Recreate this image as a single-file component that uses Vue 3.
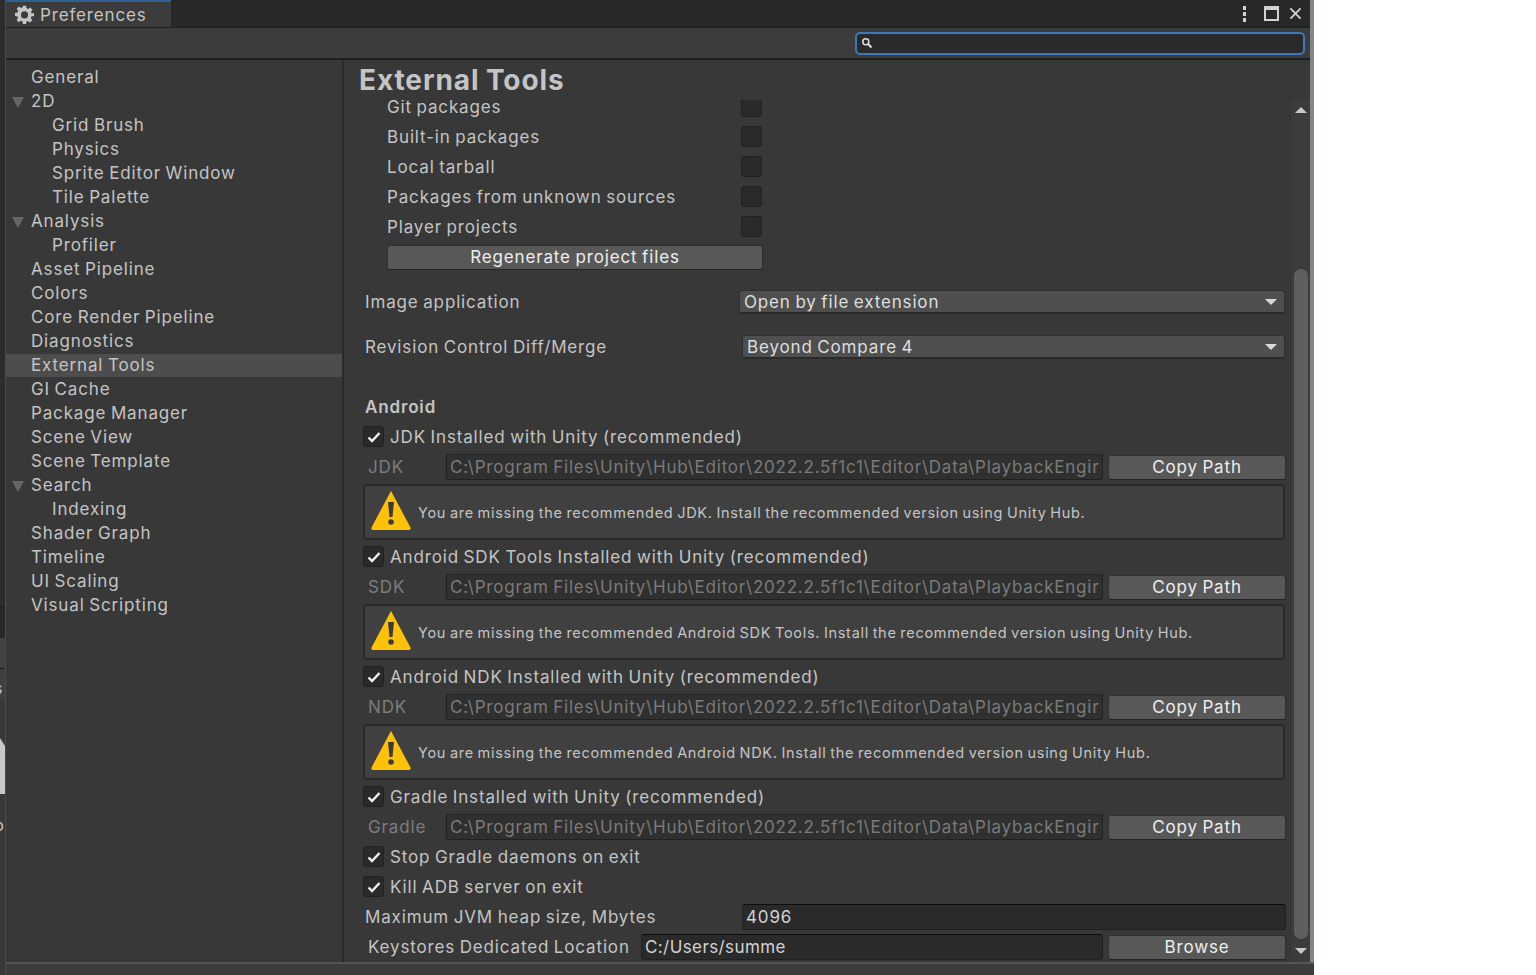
<template>
  <div class="screen">
    <div class="behind">
      <div class="seg seg-top"></div>
      <div class="seg seg-dark"></div>
      <div class="seg seg-light"></div>
      <div class="seg seg-tab"><span>s</span></div>
      <div class="seg seg-mid"></div>
      <div class="seg seg-white"></div>
      <div class="seg seg-low"><span>p</span></div>
    </div>

    <div class="window">
      <div class="titlebar">
        <div class="tab">
          <svg class="gear" viewBox="0 0 24 24" width="20" height="20">
            <path fill="#c4c4c4" fill-rule="evenodd" d="M10 1h4l.6 3.2 1.9.8 2.7-1.8 2.8 2.8-1.8 2.7.8 1.9L24 10v4l-3.2.6-.8 1.9 1.8 2.7-2.8 2.8-2.7-1.8-1.9.8L14 24h-4l-.6-3.2-1.9-.8-2.7 1.8-2.8-2.8 1.8-2.7-.8-1.9L0 14v-4l3.2-.6.8-1.9-1.8-2.7 2.8-2.8 2.7 1.8 1.9-.8zM12 8a4.500 4.500 0 1 0 0 9 4.500 4.500 0 0 0 0-9z"/>
          </svg>
          <span>Preferences</span>
        </div>
        <div class="win-btns">
          <div class="kebab"><i></i><i></i><i></i></div>
          <div class="maximize"></div>
          <svg viewBox="0 0 14 14" width="13" height="13">
            <path d="M1.500 1.500l11 11M12.500 1.500l-11 11" stroke="#d2d2d2" stroke-width="2" fill="none"/>
          </svg>
        </div>
      </div>

      <div class="toolbar">
        <div class="search">
          <svg viewBox="0 0 12 12" width="12" height="12">
            <circle cx="4.800" cy="4.800" r="3" stroke="#e0e0e0" stroke-width="1.500" fill="none"/>
            <path d="M7 7l3.500 3.500" stroke="#e0e0e0" stroke-width="2"/>
          </svg>
        </div>
      </div>

      <div class="main">
        <aside class="sidebar">
          <div
            v-for="item in tree"
            :key="item.label"
            class="tree-row"
            :class="{ selected: item.label === 'External Tools', child: item.child }"
          >
            <span v-if="item.open" class="fold"></span>
            {{ item.label }}
          </div>
        </aside>

        <section class="content">
          <h1>External Tools</h1>
          <div class="body">
            <div class="scroll">
              <div class="list">
                <div v-for="name in packages" :key="name" class="row pkg-row">
                  <span class="pkg-label">{{ name }}</span>
                  <span class="check"></span>
                </div>
                <div class="row pkg-row">
                  <button type="button" class="btn regen">Regenerate project files</button>
                </div>

                <div class="row pick first-pick">
                  <span class="pick-label">Image application</span>
                  <div class="dropdown image-drop">Open by file extension<i></i></div>
                </div>
                <div class="row pick">
                  <span class="pick-label">Revision Control Diff/Merge</span>
                  <div class="dropdown rev-drop">Beyond Compare 4<i></i></div>
                </div>

                <div class="row android"><strong>Android</strong></div>

                <template v-for="tool in tools" :key="tool.short">
                  <div class="row">
                    <span class="check on"><svg viewBox="0 0 14 14" width="14" height="14"><path d="M1.500 7.500l3.500 3.500 7.500-8" stroke="#f0f0f0" stroke-width="2.400" fill="none"/></svg></span>
                    <span class="check-label">{{ tool.label }}</span>
                  </div>
                  <div class="row">
                    <span class="short">{{ tool.short }}</span>
                    <div class="field path">{{ path }}</div>
                    <button type="button" class="btn side-btn">Copy Path</button>
                  </div>
                  <div v-if="tool.warn" class="help">
                    <svg viewBox="0 0 40 40" width="40" height="40">
                      <path d="M20 0L39.500 36.500q.8 2.500-1.500 2.500H2q-2.300 0-1.500-2.500z" fill="#ffc107"/>
                      <path d="M17 11h6l-1.500 15h-3z" fill="#3c3c3c"/>
                      <circle cx="20" cy="31" r="2.800" fill="#3c3c3c"/>
                    </svg>
                    <span>{{ tool.warn }}</span>
                  </div>
                </template>

                <div class="row">
                  <span class="check on"><svg viewBox="0 0 14 14" width="14" height="14"><path d="M1.500 7.500l3.500 3.500 7.500-8" stroke="#f0f0f0" stroke-width="2.400" fill="none"/></svg></span>
                  <span class="check-label">Stop Gradle daemons on exit</span>
                </div>
                <div class="row">
                  <span class="check on"><svg viewBox="0 0 14 14" width="14" height="14"><path d="M1.500 7.500l3.500 3.500 7.500-8" stroke="#f0f0f0" stroke-width="2.400" fill="none"/></svg></span>
                  <span class="check-label">Kill ADB server on exit</span>
                </div>
                <div class="row">
                  <span class="pick-label">Maximum JVM heap size, Mbytes</span>
                  <div class="field heap">4096</div>
                </div>
                <div class="row">
                  <span class="store-label">Keystores Dedicated Location</span>
                  <div class="field store">C:/Users/summe</div>
                  <button type="button" class="btn side-btn">Browse</button>
                </div>
              </div>
            </div>

            <div class="scrollbar">
              <span class="arrow up"></span>
              <div class="track"><div class="thumb"></div></div>
              <span class="arrow down"></span>
            </div>
          </div>
        </section>
      </div>
      <div class="footer"></div>
    </div>
  </div>
</template>

<script setup>
const tree = [
  { label: 'General' },
  { label: '2D', open: true },
  { label: 'Grid Brush', child: true },
  { label: 'Physics', child: true },
  { label: 'Sprite Editor Window', child: true },
  { label: 'Tile Palette', child: true },
  { label: 'Analysis', open: true },
  { label: 'Profiler', child: true },
  { label: 'Asset Pipeline' },
  { label: 'Colors' },
  { label: 'Core Render Pipeline' },
  { label: 'Diagnostics' },
  { label: 'External Tools' },
  { label: 'GI Cache' },
  { label: 'Package Manager' },
  { label: 'Scene View' },
  { label: 'Scene Template' },
  { label: 'Search', open: true },
  { label: 'Indexing', child: true },
  { label: 'Shader Graph' },
  { label: 'Timeline' },
  { label: 'UI Scaling' },
  { label: 'Visual Scripting' },
]

const packages = ['Git packages', 'Built-in packages', 'Local tarball', 'Packages from unknown sources', 'Player projects']

const path = 'C:\\Program Files\\Unity\\Hub\\Editor\\2022.2.5f1c1\\Editor\\Data\\PlaybackEngir'

const tools = [
  {
    short: 'JDK',
    label: 'JDK Installed with Unity (recommended)',
    warn: 'You are missing the recommended JDK. Install the recommended version using Unity Hub.',
  },
  {
    short: 'SDK',
    label: 'Android SDK Tools Installed with Unity (recommended)',
    warn: 'You are missing the recommended Android SDK Tools. Install the recommended version using Unity Hub.',
  },
  {
    short: 'NDK',
    label: 'Android NDK Installed with Unity (recommended)',
    warn: 'You are missing the recommended Android NDK. Install the recommended version using Unity Hub.',
  },
  { short: 'Gradle', label: 'Gradle Installed with Unity (recommended)' },
]
</script>

<style>
html,
body {
  margin: 0;
  background: #fff;
}
</style>

<style scoped>
.screen {
  display: flex;
  width: 1314px;
  height: 975px;
  overflow: hidden;
  font-family: Inter, "Liberation Sans", sans-serif;
  font-size: 17px;
  letter-spacing: 0.85px;
  word-spacing: -1px;
  color: #c4c4c4;
}

.behind {
  flex: 0 0 5px;
  display: flex;
  flex-direction: column;
  overflow: hidden;
  background: #3a3a3a;
}

.seg span {
  display: block;
  margin-left: -6px;
  color: #c4c4c4;
  font-size: 16px;
}

.seg-top { height: 606px; background: #2c2c2c; }
.seg-dark { height: 32px; background: #282828; border-top: 1px solid #1c1c1c; box-sizing: border-box; }
.seg-light { height: 30px; background: #424242; }
.seg-tab { height: 32px; padding-top: 9px; box-sizing: border-box; background: #3f3f3f; border-top: 1px solid #1c1c1c; }
.seg-mid { height: 38px; background: #383838; }
.seg-white { height: 56px; background: #c8c8c8; clip-path: polygon(0 0, 100% 8px, 100% 100%, 0 100%); }
.seg-low { height: 181px; padding-top: 21px; box-sizing: border-box; background: #383838; }

.window {
  flex: 1;
  min-width: 0;
  display: flex;
  flex-direction: column;
  border-left: 1px solid #4a4a4a;
  border-right: 4px solid #7d8888;
}

.titlebar {
  flex: 0 0 27px;
  display: flex;
  justify-content: space-between;
  background: #282828;
  border-bottom: 1px solid #1f1f1f;
}

.tab {
  width: 165px;
  box-sizing: border-box;
  border-top: 2px solid #2f5f93;
  background: #3c3c3c;
  display: flex;
  align-items: center;
  gap: 6px;
  padding-left: 9px;
}

.gear {
  width: 19px;
  height: 19px;
}

.win-btns {
  display: flex;
  align-items: center;
  gap: 10px;
  padding-right: 8px;
}

.kebab {
  display: flex;
  flex-direction: column;
  gap: 2px;
  margin-right: 8px;
}

.kebab i {
  width: 3px;
  height: 4px;
  background: #d2d2d2;
}

.maximize {
  width: 11px;
  height: 9px;
  border: 2px solid #d2d2d2;
  border-top-width: 4px;
}

.toolbar {
  flex: 0 0 30px;
  display: flex;
  justify-content: flex-end;
  align-items: center;
  padding-right: 5px;
  background: #3c3c3c;
  border-bottom: 2px solid #1f1f1f;
}

.search {
  width: 450px;
  height: 23px;
  display: flex;
  align-items: center;
  padding-left: 4px;
  box-sizing: border-box;
  background: #2a2a2a;
  border: 2px solid #3a79bb;
  border-radius: 5px;
}

.main {
  flex: 1;
  min-height: 0;
  display: flex;
}

.sidebar {
  flex: 0 0 336px;
  padding-top: 5px;
  background: #383838;
  border-right: 2px solid #2a2a2a;
}

.tree-row {
  position: relative;
  height: 24px;
  line-height: 24px;
  padding-left: 25px;
}

.tree-row.child {
  padding-left: 46px;
}

.tree-row.selected {
  box-sizing: border-box;
  line-height: 22px;
  background: #4d4d4d;
  border-top: 1px solid #383838;
}

.fold {
  position: absolute;
  left: 6px;
  top: 8px;
  width: 0;
  height: 0;
  border-left: 6px solid transparent;
  border-right: 6px solid transparent;
  border-top: 11px solid #666;
}

.content {
  flex: 1;
  min-width: 0;
  display: flex;
  flex-direction: column;
  background: #383838;
}

h1 {
  flex: 0 0 40px;
  min-height: 0;
  margin: 0;
  padding-left: 15px;
  font-size: 28px;
  line-height: 41px;
  font-weight: 700;
  letter-spacing: 0.9px;
  color: #c4c4c4;
}

.body {
  flex: 1;
  min-height: 0;
  display: flex;
}

.scroll {
  flex: 1;
  min-width: 0;
  overflow: hidden;
}

.list {
  margin-top: -8px;
  padding-left: 19px;
  padding-right: 3px;
}

.row {
  height: 30px;
  display: flex;
  align-items: center;
}

.pkg-row {
  padding-left: 24px;
}

.pkg-label {
  width: 354px;
}

.check {
  width: 19px;
  height: 19px;
  margin-top: -1px;
  flex: none;
  display: flex;
  align-items: center;
  justify-content: center;
  background: #2a2a2a;
  border: 1px solid #212121;
  border-radius: 3px;
}

.check.on {
  margin-right: 6px;
}

.btn {
  height: 25px;
  padding: 0;
  box-sizing: border-box;
  font: inherit;
  letter-spacing: inherit;
  word-spacing: inherit;
  color: #eee;
  background: #585858;
  border: 1px solid #303030;
  border-bottom-color: #242424;
  border-radius: 3px;
}

.regen {
  width: 376px;
}

.pick {
  justify-content: space-between;
  margin-top: 15px;
}

.android {
  margin-top: 30px;
  padding-left: 2px;
  color: #c4c4c4;
}

.android strong {
  font-weight: 600;
}

.pick-label {
  padding-left: 2px;
}

.dropdown {
  position: relative;
  height: 24px;
  line-height: 23px;
  box-sizing: border-box;
  margin-right: 2px;
  padding-left: 4px;
  color: #dedede;
  background: #4f4f4f;
  border: 1px solid #303030;
  border-bottom: 2px solid #2a2a2a;
  border-radius: 3px;
}

.dropdown i {
  position: absolute;
  right: 7px;
  top: 8px;
  width: 0;
  height: 0;
  border-left: 6px solid transparent;
  border-right: 6px solid transparent;
  border-top: 6px solid #d8d8d8;
}

.image-drop {
  width: 546px;
}

.rev-drop {
  width: 543px;
}

.short {
  width: 83px;
  flex: none;
  padding-left: 5px;
  box-sizing: border-box;
  color: #7d7d7d;
}

.field {
  height: 26px;
  line-height: 25px;
  box-sizing: border-box;
  padding-left: 3px;
  overflow: hidden;
  white-space: nowrap;
  background: #2a2a2a;
  border: 1px solid #212121;
  border-top-color: #0e0e0e;
  border-radius: 3px;
  color: #d2d2d2;
}

.path {
  width: 657px;
  flex: none;
  letter-spacing: 0.78px;
  color: #7a7a7a;
  background: #303030;
  border-top-color: #262626;
}

.side-btn {
  width: 178px;
  flex: none;
  margin-left: 5px;
}

.heap {
  width: 544px;
  margin-left: auto;
  margin-right: 1px;
}

.store-label {
  flex: none;
  width: 278px;
  padding-left: 5px;
  box-sizing: border-box;
  white-space: nowrap;
}

.store {
  width: 462px;
  flex: none;
  letter-spacing: 0.4px;
}

.help {
  height: 56px;
  margin: 2px 0;
  width: 922px;
  box-sizing: border-box;
  display: flex;
  align-items: center;
  gap: 7px;
  padding-left: 6px;
  font-size: 14.500px;
  letter-spacing: 0.7px;
  background: #404040;
  border: 2px solid #2a2a2a;
  border-radius: 4px;
}

.help svg {
  flex: none;
  margin-bottom: 2px;
}

.scrollbar {
  flex: 0 0 18px;
  padding-left: 1px;
  display: flex;
  flex-direction: column;
  align-items: center;
  background: #3c3c3c;
  border-left: 1px solid #353535;
}

.arrow {
  flex: none;
  width: 0;
  height: 0;
  border-left: 6px solid transparent;
  border-right: 6px solid transparent;
}

.arrow.up {
  margin: 7px 0 5px;
  border-bottom: 6px solid #c8c8c8;
}

.arrow.down {
  margin: 6px 0 8px;
  border-top: 6px solid #c8c8c8;
}

.track {
  flex: 1;
  width: 100%;
  display: flex;
  justify-content: center;
  align-items: flex-end;
}

.thumb {
  flex: none;
  width: 14px;
  height: 670px;
  margin-bottom: 3px;
  background: #5f5f5f;
  border-radius: 7px;
}

.footer {
  flex: 0 0 11px;
  margin-right: -4px;
  background: #3c3c3c;
  border-top: 2px solid #555;
}
</style>
